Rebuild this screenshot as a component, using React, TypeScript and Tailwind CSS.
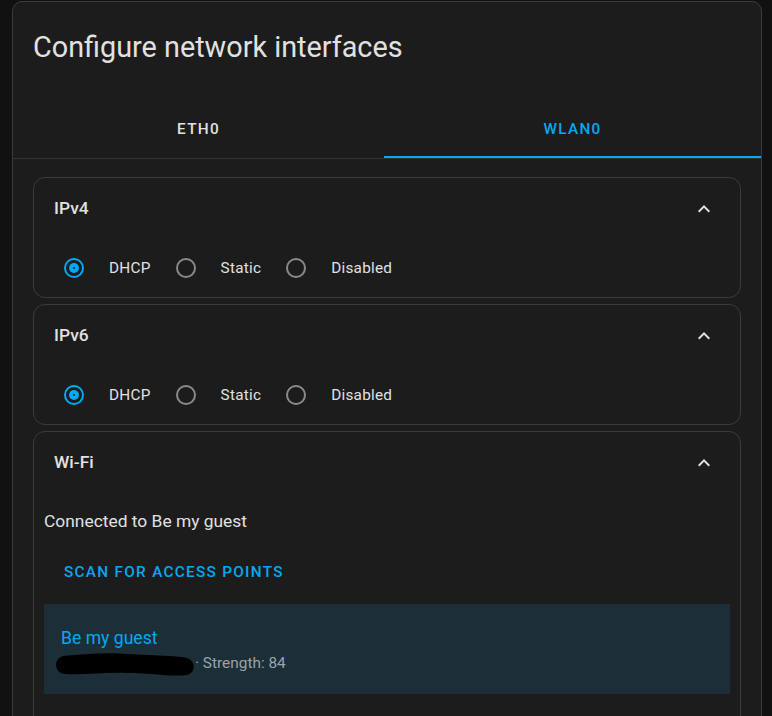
import React from "react";

const font = { fontFamily: "Roboto, 'Noto Sans', sans-serif" };

function Chevron() {
  return (
    <svg width="24" height="24" viewBox="0 0 24 24" className="text-[#e1e1e1]">
      <path d="M7.41 15.41 12 10.83l4.59 4.58L18 14l-6-6-6 6z" fill="currentColor" />
    </svg>
  );
}

function Radio({ checked, label }: { checked?: boolean; label: string }) {
  return (
    <div className="flex items-center">
      <div className="p-[10px]">
        {checked ? (
          <div className="w-5 h-5 rounded-full border-2 border-[#03a9f4] flex items-center justify-center">
            <div className="w-[10px] h-[10px] rounded-full bg-[#03a9f4] flex items-center justify-center">
              <div className="w-[2px] h-[2px] rounded-full bg-[#1c1c1c]" />
            </div>
          </div>
        ) : (
          <div className="w-5 h-5 rounded-full border-2 border-[#8a8a8a]" />
        )}
      </div>
      <span className="pl-[15px] pr-[15px] text-[15.3px] text-[#e1e1e1] tracking-[0.25px]">{label}</span>
    </div>
  );
}

function IpCard({ title }: { title: string }) {
  return (
    <div className="rounded-[12px] border border-[#3b3b3b]">
      <div className="h-[61px] flex items-center justify-between pl-5 pr-6">
        <span className="text-[17.4px] font-medium text-[#e1e1e1]">{title}</span>
        <Chevron />
      </div>
      <div className="h-[58px] flex items-center pl-5">
        <Radio checked label="DHCP" />
        <Radio label="Static" />
        <Radio label="Disabled" />
      </div>
    </div>
  );
}

export default function App() {
  return (
    <div className="h-[716px] overflow-hidden bg-[#111111] pl-3 pr-[10px] pt-px" style={font}>
      <div className="h-[760px] rounded-t-[10px] border border-[#3b3b3b] bg-[#1c1c1c]">
        <div className="h-[84px] pl-5 pt-[23px]">
          <h1 className="text-[28.8px] leading-[44px] text-[#e1e1e1]">Configure network interfaces</h1>
        </div>
        <div className="flex border-b border-[#333333]">
          <div className="w-[371px] h-[72px] flex items-center justify-center pt-[14px]">
            <span className="text-[15.3px] font-medium tracking-[1.3px] text-[#e1e1e1]">ETH0</span>
          </div>
          <div className="flex-1 h-[72px] flex items-center justify-center pt-[14px] relative">
            <span className="text-[15.3px] font-medium tracking-[1.3px] text-[#03a9f4]">WLAN0</span>
            <div className="absolute left-0 right-0 bottom-0 h-[2px] bg-[#03a9f4]" />
          </div>
        </div>
        <div className="px-5 pt-[18px] flex flex-col gap-[6px]">
          <IpCard title="IPv4" />
          <IpCard title="IPv6" />
          <div className="rounded-t-[12px] border border-[#3b3b3b] h-[400px]">
            <div className="h-[61px] flex items-center justify-between pl-5 pr-6">
              <span className="text-[17.4px] font-medium text-[#e1e1e1]">Wi-Fi</span>
              <Chevron />
            </div>
            <div className="px-[10px]">
              <div className="h-[56px] flex items-center text-[17.4px] text-[#e1e1e1]">Connected to Be my guest</div>
              <div className="h-[36px] flex items-center pl-5 mt-[5px]">
                <span className="text-[15.3px] font-medium tracking-[1.3px] text-[#03a9f4]">SCAN FOR ACCESS POINTS</span>
              </div>
              <div className="mt-[14px] h-[90px] bg-[#1c2e37] pl-[17px] pt-[4px] flex flex-col justify-center">
                <div className="text-[17.6px] leading-[26px] text-[#03a9f4]">Be my guest</div>
                <div className="flex items-center h-[26px] -ml-[8px]">
                  <svg width="145" height="28" viewBox="0 0 145 28" className="shrink-0 mt-[2px]">
                    <path
                      d="M10 5 C30 3 55 1 75 3 C100 5 122 4 134 7 C143 10 143 22 134 24 C118 26 100 22 75 22 C55 21 30 24 12 23 C1 22 0 8 10 5 Z"
                      fill="#000"
                    />
                  </svg>
                  <span className="text-[15.4px] text-[#9ba3a8] -ml-[3px]">· Strength: 84</span>
                </div>
              </div>
            </div>
          </div>
        </div>
      </div>
    </div>
  );
}
